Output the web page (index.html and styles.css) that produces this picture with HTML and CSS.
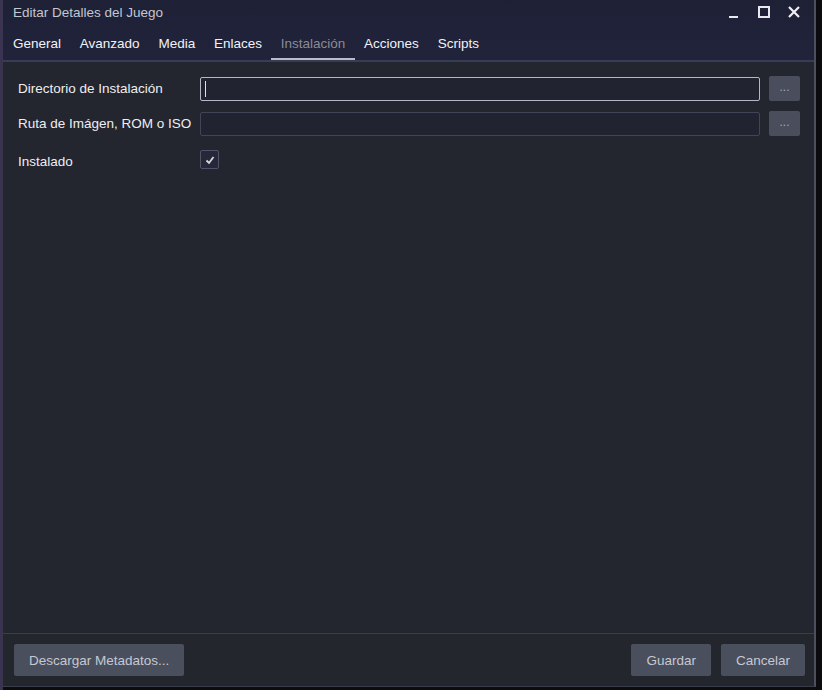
FILE: index.html
```html
<!DOCTYPE html>
<html lang="es">
<head>
  <meta charset="UTF-8">
  <title>Editar Detalles del Juego</title>
  <link rel="stylesheet" href="styles.css">
</head>
<body>

<div class="window">
  <div class="header">
    <div class="titlebar">
      <span class="title">Editar Detalles del Juego</span>
      <div class="controls">
        <svg width="12" height="12" viewBox="0 0 12 12"><rect x="1" y="10" width="9" height="2" fill="#e8e8ee"/></svg>
        <svg width="12" height="12" viewBox="0 0 12 12"><rect x="1" y="1" width="10" height="10" fill="none" stroke="#e8e8ee" stroke-width="2"/></svg>
        <svg width="12" height="12" viewBox="0 0 12 12"><path d="M1 1 L11 11 M11 1 L1 11" stroke="#f0f0f4" stroke-width="2.2"/></svg>
      </div>
    </div>
    <div class="tabs">
      <span class="tab">General</span>
      <span class="tab">Avanzado</span>
      <span class="tab">Media</span>
      <span class="tab">Enlaces</span>
      <span class="tab active">Instalación</span>
      <span class="tab">Acciones</span>
      <span class="tab">Scripts</span>
    </div>
  </div>

  <div class="content">
    <div class="row">
      <label>Directorio de Instalación</label>
      <div class="field focused"><span class="caret"></span></div>
      <button class="browse">...</button>
    </div>
    <div class="row">
      <label>Ruta de Imágen, ROM o ISO</label>
      <div class="field"></div>
      <button class="browse">...</button>
    </div>
    <div class="row">
      <label>Instalado</label>
      <div class="check">
        <svg width="10" height="10" viewBox="0 0 10 10"><path d="M1.5 5.5 L4 8 L8.5 2" fill="none" stroke="#d8d8de" stroke-width="1.8"/></svg>
      </div>
    </div>
  </div>

  <div class="footer">
    <button class="btn">Descargar Metadatos...</button>
    <div class="right">
      <button class="btn">Guardar</button>
      <button class="btn">Cancelar</button>
    </div>
  </div>
</div>

</body>
</html>
```

FILE: styles.css
```css
body {
  margin: 0;
  background-color: #0c0c10;
  font-family: "Liberation Sans", Arial, sans-serif;
  font-size: 13.5px;
  height: 690px;
  overflow: hidden;
  display: flex;
  background-image: linear-gradient(to right, #3a3450 0, #3a3450 3px, transparent 3px);
}
.window {
  margin-left: 3px;
  width: 813px;
  height: 687px;
  border-right: 2px solid #4c505c;
  border-bottom: 1px solid #3a3e4a;
  background-color: #23252f;
  display: flex;
  flex-direction: column;
  box-sizing: border-box;
}
.header {
  background: linear-gradient(to bottom, #1e2136, #20233a);
  border-bottom: 2px solid #363d56;
}
.titlebar {
  height: 24px;
  display: flex;
  align-items: center;
  justify-content: space-between;
  padding: 0 10px;
}
.title {
  color: #c4c6d0;
  font-size: 13.5px;
}
.controls {
  display: flex;
  gap: 18px;
  padding-right: 4px;
}
.tabs {
  display: flex;
  padding: 8px 0 0 0.6px;
  height: 28px;
}
.tab {
  color: #f2f2f6;
  padding: 0 9.4px;
  line-height: 24px;
  border-bottom: 2px solid transparent;
}
.tab.active {
  color: #8a8c98;
  border-bottom-color: #b8bcc8;
}
.content {
  flex: 1;
  padding: 14px 14px 0 15px;
  display: flex;
  flex-direction: column;
  gap: 10px;
}
.row {
  display: flex;
  align-items: center;
  gap: 9px;
}
.row label {
  color: #eeeef2;
  width: 173px;
  flex-shrink: 0;
  white-space: nowrap;
}
.field {
  flex: 1;
  height: 24px;
  border: 1px solid #41455a;
  border-radius: 2px;
  background-color: #212330;
  box-sizing: border-box;
  display: flex;
  align-items: center;
  padding-left: 4px;
}
.field.focused {
  border-color: #b4b8c6;
}
.caret {
  width: 1px;
  height: 16px;
  background-color: #e0e0e6;
}
.browse {
  width: 31px;
  height: 25px;
  border: none;
  border-radius: 2px;
  background-color: #4a4d5c;
  color: #a4a6b4;
  font-family: inherit;
  font-size: 12px;
  padding: 0 0 3px;
}
.check {
  width: 17px;
  height: 17px;
  border: 1px solid #50546a;
  border-radius: 2px;
  background-color: #262838;
  display: flex;
  align-items: center;
  justify-content: center;
  margin: 4px 0 8px 0;
}
.footer {
  border-top: 1px solid #3a3e4c;
  height: 52px;
  display: flex;
  align-items: center;
  justify-content: space-between;
  padding: 0 9px 0 11px;
  background-color: #24262d;
}
.right {
  display: flex;
  gap: 10px;
}
.btn {
  height: 32px;
  padding: 0 15px;
  border: none;
  border-radius: 2px;
  background-color: #4a4f5e;
  color: #c6c8d2;
  font-family: inherit;
  font-size: 13.5px;
}
```
